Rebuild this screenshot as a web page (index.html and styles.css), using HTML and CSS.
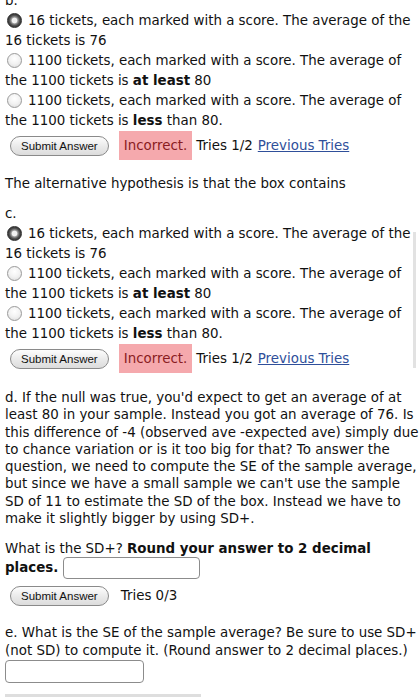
FILE: index.html
```html
<!DOCTYPE html>
<html>
<head>
<meta charset="utf-8">
<link rel="stylesheet" href="styles.css">
</head>
<body>
<div class="page">
  <div class="label cut">b.</div>
  <div class="options">
    <div class="opt"><span class="radio on"></span>16 tickets, each marked with a score. The average of the 16 tickets is 76</div>
    <div class="opt"><span class="radio"></span>1100 tickets, each marked with a score. The average of the 1100 tickets is <b>at least</b> 80</div>
    <div class="opt"><span class="radio"></span>1100 tickets, each marked with a score. The average of the 1100 tickets is <b>less</b> than 80.</div>
  </div>
  <div class="submit-row">
    <button class="btn">Submit Answer</button>
    <span class="bad">Incorrect.</span>
    <span class="tries">Tries 1/2</span>
    <a class="prev" href="#">Previous Tries</a>
  </div>

  <p class="alt">The alternative hypothesis is that the box contains</p>

  <div class="block-c">
    <div class="label">c.</div>
    <div class="options">
      <div class="opt"><span class="radio on"></span>16 tickets, each marked with a score. The average of the 16 tickets is 76</div>
      <div class="opt"><span class="radio"></span>1100 tickets, each marked with a score. The average of the 1100 tickets is <b>at least</b> 80</div>
      <div class="opt"><span class="radio"></span>1100 tickets, each marked with a score. The average of the 1100 tickets is <b>less</b> than 80.</div>
    </div>
    <div class="submit-row">
      <button class="btn">Submit Answer</button>
      <span class="bad">Incorrect.</span>
      <span class="tries">Tries 1/2</span>
      <a class="prev" href="#">Previous Tries</a>
    </div>
  </div>

  <p class="para">d. If the null was true, you'd expect to get an average of at least 80 in your sample. Instead you got an average of 76. Is this difference of -4 (observed ave -expected ave) simply due to chance variation or is it too big for that? To answer the question, we need to compute the SE of the sample average, but since we have a small sample we can't use the sample<br>SD of 11 to estimate the SD of the box. Instead we have to make it slightly bigger by using SD+.</p>

  <p class="q">What is the SD+? <b>Round your answer to 2 decimal places.</b> <span class="input wide"></span></p>
  <div class="submit-row plain">
    <button class="btn">Submit Answer</button>
    <span class="tries">Tries 0/3</span>
  </div>

  <p class="q e">e. What is the SE of the sample average? Be sure to use SD+ (not SD) to compute it. (Round answer to 2 decimal places.)</p>
  <span class="input box-e"></span>
  <div class="rule"></div>
</div>
</body>
</html>
```

FILE: styles.css
```css
html, body {
  margin: 0;
  padding: 0;
  background: #fff;
}
body {
  font-family: "DejaVu Sans", Verdana, sans-serif;
  font-size: 13.4px;
  color: #111;
  overflow: hidden;
}
.page {
  padding: 0 0 0 5px;
  margin-top: -9px;
}
.label {
  line-height: 20px;
  height: 20px;
}
.options {
  margin-right: 4px;
}
.options .opt {
  line-height: 20px;
}
.radio {
  display: inline-block;
  width: 15px;
  height: 15px;
  border-radius: 50%;
  box-sizing: border-box;
  margin: 0 6px 0 2px;
  vertical-align: -3px;
  border: 1px solid #9a9a9a;
  background: radial-gradient(circle at 50% 35%, #ffffff 0%, #f2f2f2 50%, #d9d9d9 100%);
}
.radio.on {
  border: 1px solid #2e2e2e;
  background: radial-gradient(circle at 50% 50%, #f0f0f0 0 2.5px, #a0a0a0 3.2px, #555 5px, #2e2e2e 7px);
}
.submit-row {
  display: flex;
  align-items: center;
  height: 29px;
  margin-top: 0;
}
.btn {
  font-family: "Liberation Sans", Arial, sans-serif;
  font-size: 11.5px;
  color: #111;
  height: 20px;
  padding: 0 10px;
  margin-left: 5px;
  border: 1px solid #8a8a8a;
  border-radius: 10px;
  background: linear-gradient(#fdfdfd, #e9e9e9 55%, #dcdcdc);
  line-height: 18px;
}
.bad {
  background: #f5a9ad;
  color: #8a1c22;
  height: 29px;
  line-height: 29px;
  padding: 0 5px;
  margin-left: 10px;
}
.tries {
  margin-left: 4px;
}
.prev {
  margin-left: 5px;
  color: #2f4f9a;
  text-decoration: underline;
}
.alt {
  margin: 14px 0 0 0;
  line-height: 20px;
}
.block-c {
  position: relative;
  margin-top: 10px;
}
.block-c::after {
  content: "";
  position: absolute;
  right: 4px;
  top: 28px;
  width: 3px;
  height: 136px;
  background: #e2e2e2;
}
.para {
  margin: 16px 0 0 0;
  line-height: 17.3px;
}
.q {
  margin: 12px 0 0 0;
  line-height: 19px;
}
.input {
  display: inline-block;
  box-sizing: border-box;
  border: 1px solid #8c8c8c;
  border-radius: 4px;
  background: #fff;
}
.input.wide {
  width: 137px;
  height: 22px;
  vertical-align: middle;
  margin: -2px 0;
}
.plain {
  margin-top: 4px;
}
.plain .tries {
  margin-left: 12px;
}
.q.e {
  margin-top: 14px;
  line-height: 18px;
}
.box-e {
  display: block;
  width: 139px;
  height: 23px;
  margin-top: 0;
}
.rule {
  width: 196px;
  height: 3px;
  background: #dedede;
  margin-top: 11px;
}
```
